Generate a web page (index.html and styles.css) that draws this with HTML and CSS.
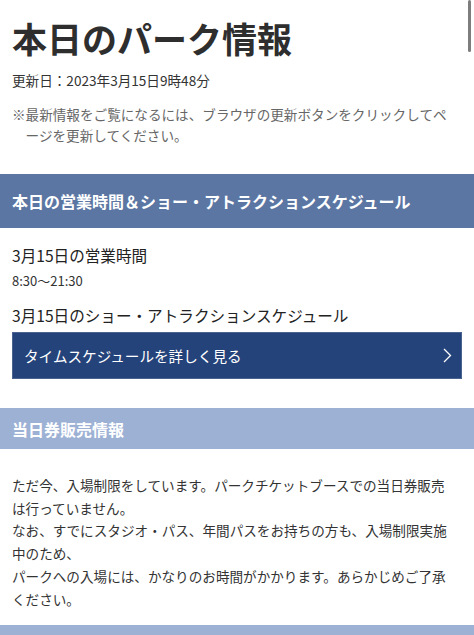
FILE: index.html
```
<!DOCTYPE html>
<html lang="ja">
<head>
<meta charset="utf-8">
<title>本日のパーク情報</title>
<link rel="stylesheet" href="styles.css">
</head>
<body>
<div class="page">
  <div class="intro">
    <h1 class="title">本日のパーク情報</h1>
    <p class="updated">更新日：2023年3月15日9時48分</p>
    <p class="note">※最新情報をご覧になるには、ブラウザの更新ボタンをクリックしてページを更新してください。</p>
  </div>

  <section class="section">
    <h2 class="section-head dark">本日の営業時間＆ショー・アトラクションスケジュール</h2>
    <div class="schedule">
      <p class="day-title">3月15日の営業時間</p>
      <p class="hours">8:30〜21:30</p>
      <p class="day-title show">3月15日のショー・アトラクションスケジュール</p>
      <a class="btn" href="#">
        <span>タイムスケジュールを詳しく見る</span>
        <svg class="chev" width="9" height="15" viewBox="0 0 9 15"><path d="M1 1 L7.5 7.5 L1 14" fill="none" stroke="#fff" stroke-width="1.3"/></svg>
      </a>
    </div>
  </section>

  <section class="section">
    <h2 class="section-head light">当日券販売情報</h2>
    <p class="body-text">ただ今、入場制限をしています。パークチケットブースでの当日券販売は行っていません。<br>なお、すでにスタジオ・パス、年間パスをお持ちの方も、入場制限実施中のため、<br>パークへの入場には、かなりのお時間がかかります。あらかじめご了承ください。</p>
  </section>

  <section class="section">
    <h2 class="section-head light next"></h2>
  </section>

  <div class="scrollbar"></div>
</div>
</body>
</html>
```

FILE: styles.css
```
html, body {
  margin: 0;
  padding: 0;
  background: #fff;
}
body {
  font-family: "Noto Sans CJK JP", "Noto Sans", sans-serif;
  color: #333;
  overflow: hidden;
}
.page {
  position: relative;
  width: 474px;
  height: 635px;
  overflow: hidden;
}
.intro {
  padding: 15px 12px 0;
}
.title {
  margin: 0;
  font-size: 35px;
  line-height: 45px;
  font-weight: 700;
  color: #2e2e2e;
}
.updated {
  margin: 10px 0 0;
  font-size: 13.6px;
  line-height: 20px;
  color: #333;
}
.note {
  margin: 14px 0 0;
  padding-right: 10px;
  font-size: 13.6px;
  line-height: 20.5px;
  color: #666;
  padding-left: 1em;
  text-indent: -1em;
  line-break: loose;
}
.section {
  margin-top: 29px;
}
.section-head {
  margin: 0;
  display: flex;
  align-items: center;
  padding: 0 12px;
  color: #fff;
  font-size: 16px;
  font-weight: 700;
}
.section-head.dark {
  height: 54px;
  background: #5b76a3;
}
.section-head.light {
  height: 41px;
  background: #9db1d5;
}
.section-head.next {
  height: 40px;
}
.schedule {
  padding: 15px 12px 0;
}
.day-title {
  margin: 0;
  font-size: 15.6px;
  line-height: 24px;
  color: #222;
}
.hours {
  margin: 5px 0 0;
  font-size: 13px;
  line-height: 18px;
  color: #333;
}
.day-title.show {
  margin-top: 13px;
}
.btn {
  margin-top: 5px;
  height: 47px;
  box-sizing: border-box;
  display: flex;
  align-items: center;
  justify-content: space-between;
  padding: 0 9px 0 11px;
  background: #25437b;
  border: 1px solid #4a638f;
  color: #fff;
  text-decoration: none;
  font-size: 14.6px;
}
.chev {
  display: block;
}
.body-text {
  margin: 0;
  padding: 25px 20px 0 12px;
  font-size: 13.6px;
  line-height: 22.7px;
  color: #333;
}
.section:last-of-type {
  margin-top: 15px;
}
.scrollbar {
  position: absolute;
  top: 0;
  right: 3px;
  width: 3px;
  height: 52px;
  background: #7d7d7d;
  border-radius: 2px;
}
```
